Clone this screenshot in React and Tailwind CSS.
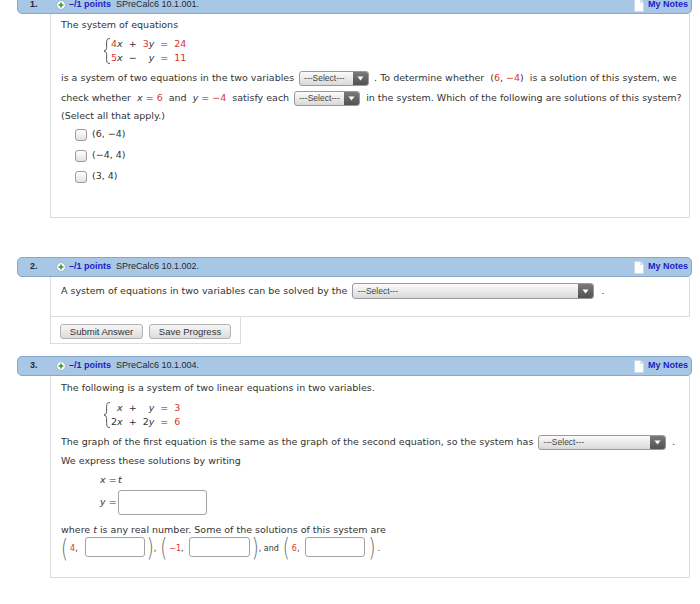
import React from "react";

const BODY_FONT = { fontFamily: '"DejaVu Sans", Verdana, sans-serif' };

const Red = ({ children }) => <span className="text-[#d8352f]">{children}</span>;
const V = ({ children }) => <span className="italic">{children}</span>;

const PlusIcon = () => (
  <svg width="10" height="10" viewBox="0 0 10 10" className="shrink-0">
    <circle cx="5" cy="5" r="4.4" fill="#fff" stroke="#8fb0cf" strokeWidth="0.8" />
    <path d="M5 2.6v4.8M2.6 5h4.8" stroke="#2f9a2f" strokeWidth="1.5" />
  </svg>
);

const NoteIcon = () => (
  <svg width="10" height="13" viewBox="0 0 10 13" className="shrink-0">
    <path d="M0.5 0.5h6l3 3v9h-9z" fill="#fff" stroke="#c9d6e3" strokeWidth="0.8" />
    <path d="M6.5 0.5v3h3" fill="#eef2f6" stroke="#c9d6e3" strokeWidth="0.8" />
  </svg>
);

const Header = ({ num, code, className = "" }) => (
  <div
    className={`flex items-center rounded-[5px] border border-[#86a7c9] bg-[#a8c7e4] pr-[3px] ${className}`}
    style={{ fontFamily: '"Liberation Sans", Arial, sans-serif' }}
  >
    <span className="w-[38px] pl-[12px] text-[9px] font-bold text-[#1d2a3a]">{num}</span>
    <PlusIcon />
    <span className="ml-[3px] text-[9px] font-bold text-[#1c1cc4]">–/1 points</span>
    <span className="ml-[5px] text-[9px] text-[#1e2a36]">{code}</span>
    <span className="ml-auto flex items-center gap-[4px]">
      <NoteIcon />
      <span className="text-[9px] font-bold text-[#1c1cc4]">My Notes</span>
    </span>
  </div>
);

const Select = ({ w, h = 15 }) => (
  <span
    className="inline-flex items-stretch overflow-hidden rounded-[3px] border border-[#9a9a9a] bg-gradient-to-b from-[#fbfbfb] to-[#d9d9d9] align-middle"
    style={{ width: w, height: h }}
  >
    <span
      className="flex flex-1 items-center pl-[4px] text-[8.5px] text-[#444]"
      style={{ fontFamily: '"Liberation Sans", Arial, sans-serif' }}
    >
      ---Select---
    </span>
    <span className="flex w-[15px] items-center justify-center bg-gradient-to-b from-[#7a7a7a] to-[#525252]">
      <svg width="7" height="5" viewBox="0 0 7 5">
        <path d="M0.5 0.5h6l-3 4z" fill="#fff" />
      </svg>
    </span>
  </span>
);

const Checkbox = () => (
  <span className="inline-block h-[12px] w-[12px] rounded-[3px] border border-[#9b9b9b] bg-gradient-to-b from-white to-[#e2e2e2]" />
);

const Input = ({ w, h }) => (
  <span
    className="inline-block rounded-[3px] border border-[#a3a3a3] bg-white"
    style={{ width: w, height: h }}
  />
);

const Brace = () => (
  <svg width="8" height="28" viewBox="0 0 8 28" className="shrink-0">
    <path
      d="M7 1.5C4.3 1.5 3.6 2.8 3.6 5.5V10.5C3.6 12.6 2.6 13.6 1 14C2.6 14.4 3.6 15.4 3.6 17.5V22.5C3.6 25.2 4.3 26.5 7 26.5"
      fill="none"
      stroke="#444"
      strokeWidth="0.9"
    />
  </svg>
);

const Equations = ({ rows }) => (
  <div className="ml-[42px] flex h-[28px] items-center">
    <Brace />
    <div className="grid grid-cols-[auto_auto_auto_auto_auto] gap-x-[6px]">
      {rows.map((r, i) =>
        r.map((c, j) => (
          <span
            key={`${i}-${j}`}
            className={`h-[14px] leading-[14px] ${j === 4 ? "text-left" : "text-right"}`}
          >
            {c}
          </span>
        ))
      )}
    </div>
  </div>
);

const Line = ({ h = 20, className = "", children }) => (
  <div className={`flex items-center whitespace-nowrap ${className}`} style={{ height: h }}>
    {children}
  </div>
);

const Paren = ({ children }) => (
  <span className="inline-block origin-center scale-y-[1.4] text-[18px] font-light leading-none text-[#666]">
    {children}
  </span>
);

const Body = ({ className = "", children }) => (
  <div
    className={`ml-[33px] mr-[2px] border-x border-b border-[#dcdcdc] pl-[10px] text-[9.5px] text-[#333] ${className}`}
    style={BODY_FONT}
  >
    {children}
  </div>
);

export default function App() {
  return (
    <div className="h-[604px] w-[700px] overflow-hidden bg-white">
      <div className="pl-[17px] pr-[8px]">
        {/* Question 1 */}
        <Header num="1." code="SPreCalc6 10.1.001." className="-mt-[4px] h-[18px]" />
        <Body className="pt-[1px] pb-[30px]">
          <Line>The system of equations</Line>
          <div className="mt-[2px]">
            <Equations
              rows={[
                [<><Red>4</Red><V>x</V></>, "+", <><Red>3</Red><V>y</V></>, "=", <Red>24</Red>],
                [<><Red>5</Red><V>x</V></>, "−", <V>y</V>, "=", <Red>11</Red>],
              ]}
            />
          </div>
          <Line className="mt-[3px]">
            <span>is a system of two equations in the two variables</span>
            <span className="ml-[5px]"><Select w={70} /></span>
            <span className="ml-[5px]">. To determine whether&nbsp; (<Red>6</Red>, <Red>−4</Red>)&nbsp; is a solution of this system, we</span>
          </Line>
          <Line>
            <span>check whether&nbsp; <V>x</V> = <Red>6</Red>&nbsp; and&nbsp; <V>y</V> = <Red>−4</Red>&nbsp; satisfy each</span>
            <span className="ml-[5px]"><Select w={66} /></span>
            <span className="ml-[6px]">in the system. Which of the following are solutions of this system?</span>
          </Line>
          <Line h={16}>(Select all that apply.)</Line>
          {["(6, −4)", "(−4, 4)", "(3, 4)"].map((t) => (
            <Line key={t} h={21} className="ml-[14px] gap-[5px]">
              <Checkbox />
              <span>{t}</span>
            </Line>
          ))}
        </Body>

        {/* Question 2 */}
        <Header num="2." code="SPreCalc6 10.1.002." className="mt-[39px] h-[20px]" />
        <Body className="pt-[4px] pb-[15px]">
          <Line>
            <span>A system of equations in two variables can be solved by the</span>
            <span className="ml-[5px]"><Select w={242} h={16} /></span>
            <span className="ml-[7px]">.</span>
          </Line>
        </Body>
        <div
          className="ml-[33px] flex h-[27px] w-[191px] items-start gap-[6px] border-x border-b border-[#dcdcdc] pl-[9px] pt-[7px]"
          style={{ fontFamily: '"Liberation Sans", Arial, sans-serif' }}
        >
          <button className="h-[15px] w-[83px] rounded-[3px] border border-[#b3b3b3] bg-gradient-to-b from-[#f6f6f6] to-[#dcdcdc] text-[9.5px] leading-none text-[#333]">
            Submit Answer
          </button>
          <button className="h-[15px] w-[82px] rounded-[3px] border border-[#b3b3b3] bg-gradient-to-b from-[#f6f6f6] to-[#dcdcdc] text-[9.5px] leading-none text-[#333]">
            Save Progress
          </button>
        </div>

        {/* Question 3 */}
        <Header num="3." code="SPreCalc6 10.1.004." className="mt-[12px] h-[20px]" />
        <Body className="pt-[2px] pb-[16px]">
          <Line>The following is a system of two linear equations in two variables.</Line>
          <div className="mt-[3px]">
            <Equations
              rows={[
                [<V>x</V>, "+", <V>y</V>, "=", <Red>3</Red>],
                [<>2<V>x</V></>, "+", <>2<V>y</V></>, "=", <Red>6</Red>],
              ]}
            />
          </div>
          <Line className="mt-[3px]">
            <span>The graph of the first equation is the same as the graph of the second equation, so the system has</span>
            <span className="ml-[5px]"><Select w={128} /></span>
            <span className="ml-[6px]">.</span>
          </Line>
          <Line h={19}>We express these solutions by writing</Line>
          <div className="ml-[39px] grid grid-cols-[18px_auto] grid-rows-[19px_24px] items-center whitespace-nowrap">
            <span><V>x</V> =</span>
            <span><V>t</V></span>
            <span><V>y</V> =</span>
            <span className="flex items-center">
              <Input w={89} h={25} />
            </span>
          </div>
          <Line className="mt-[6px]">
            <span>where <V>t</V> is any real number. Some of the solutions of this system are</span>
          </Line>
          <Line h={24} className="-mt-[3px]">
            <Paren>(</Paren>
            <span className="ml-[2px] text-[8px]"><Red>4</Red>,</span>
            <span className="ml-[7px]"><Input w={60} h={20} /></span>
            <span className="ml-[2px]"><Paren>)</Paren></span>
            <span className="text-[8px]">,</span>
            <span className="ml-[4px]"><Paren>(</Paren></span>
            <span className="ml-[2px] text-[8px]"><Red>−1</Red>,</span>
            <span className="ml-[5px]"><Input w={61} h={20} /></span>
            <span className="ml-[2px]"><Paren>)</Paren></span>
            <span className="text-[8px]">, and</span>
            <span className="ml-[4px]"><Paren>(</Paren></span>
            <span className="ml-[2px] text-[8px]"><Red>6</Red>,</span>
            <span className="ml-[6px]"><Input w={60} h={20} /></span>
            <span className="ml-[3px]"><Paren>)</Paren></span>
            <span className="ml-[2px] text-[8px]">.</span>
          </Line>
        </Body>
      </div>
    </div>
  );
}
